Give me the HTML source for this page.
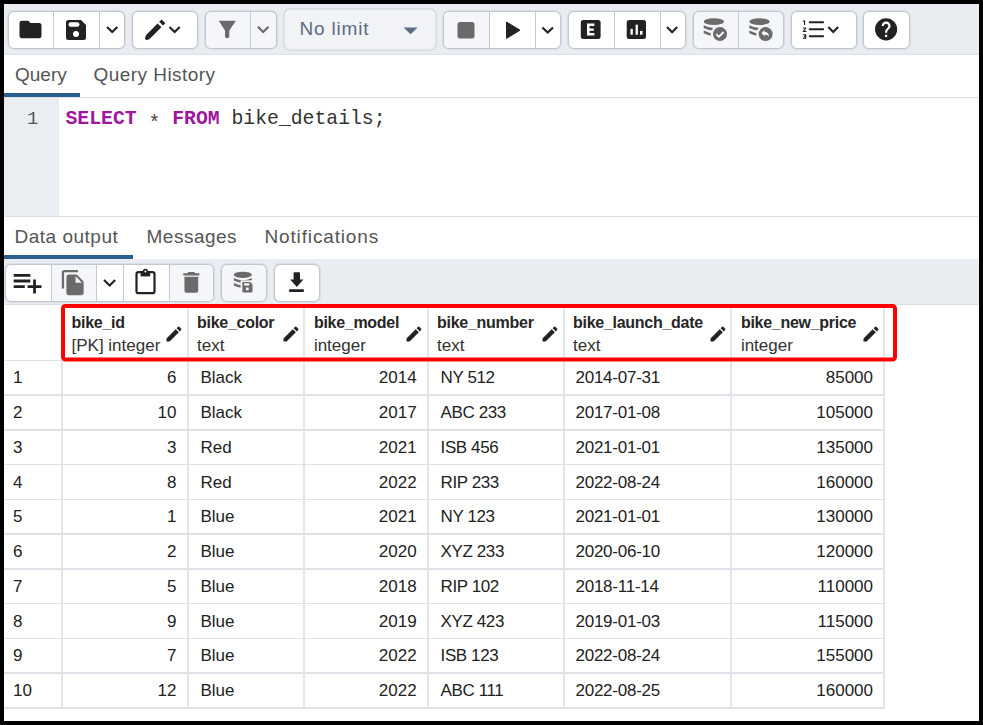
<!DOCTYPE html>
<html><head><meta charset="utf-8">
<style>
*{box-sizing:border-box;margin:0;padding:0}
html,body{width:983px;height:725px;overflow:hidden;background:#000}
body{position:relative;font-family:"Liberation Sans",sans-serif;color:#222}
.a{position:absolute}
#app{position:absolute;left:4px;top:4px;width:975px;height:717px;background:#fff;overflow:hidden}
.tb{position:absolute;background:#e9ecf1}
.g{position:absolute;border:1px solid #c2c8d2;border-radius:6px;background:#fff;box-shadow:0 0 0 0.8px rgba(194,200,210,0.5)}
.d{position:absolute;width:1px;background:#c4cad4}
.dis{background:#f5f6f9}
svg{display:block}
.ov{position:absolute;left:0;top:0}
.tab{position:absolute;font-size:19px;color:#555;white-space:nowrap}
.hl{position:absolute;height:1px;background:#dde1e7}
.hl2{position:absolute;left:4px;width:880px;height:1.5px;background:#dfe2e8}
.vl{position:absolute;width:2px;background:#e3e6eb}
.cell{position:absolute;font-size:17px;color:#222;white-space:nowrap;line-height:20px}
.hn{position:absolute;top:312.5px;font-size:16px;letter-spacing:-0.28px;font-weight:bold;color:#262626;white-space:nowrap;line-height:20px}
.ht{position:absolute;top:336px;font-size:17px;color:#333;white-space:nowrap;line-height:20px}
.pen{position:absolute;top:324px;fill:#222}
</style></head>
<body>
<div id="app"></div>
<!-- toolbar -->
<div class="tb" style="left:4px;top:4px;width:975px;height:51px;border-bottom:1px solid #dde1e7"></div>
<div class="g" style="left:8px;top:11px;width:117px;height:38px"></div>
<div class="d" style="left:53px;top:12px;height:36px"></div>
<div class="d" style="left:99px;top:12px;height:36px"></div>
<div class="g" style="left:132px;top:11px;width:66px;height:38px"></div>
<div class="g dis" style="left:204.5px;top:11px;width:72px;height:38px"></div>
<div class="d" style="left:250px;top:12px;height:36px"></div>
<div class="g" style="left:284px;top:9px;width:152px;height:41px;background:#f1f3f6;border-color:#e0e4ea"></div>
<div class="a" style="left:299.5px;top:18px;font-size:19px;letter-spacing:0.8px;color:#5d6b84;white-space:nowrap">No limit</div>
<div class="g" style="left:443px;top:11px;width:118px;height:38px"></div>
<div class="a dis" style="left:444px;top:12px;width:44.5px;height:36px;border-radius:5px 0 0 5px"></div>
<div class="d" style="left:488.5px;top:12px;height:36px"></div>
<div class="d" style="left:534.5px;top:12px;height:36px"></div>
<div class="g" style="left:568px;top:11px;width:118px;height:38px"></div>
<div class="d" style="left:613.5px;top:12px;height:36px"></div>
<div class="d" style="left:659.5px;top:12px;height:36px"></div>
<div class="g dis" style="left:692.5px;top:11px;width:91.5px;height:38px"></div>
<div class="d" style="left:738px;top:12px;height:36px"></div>
<div class="g" style="left:791px;top:11px;width:66px;height:38px"></div>
<div class="g" style="left:863px;top:11px;width:46.5px;height:38px"></div>

<!-- query tabs -->
<div class="tab" style="left:15px;top:64px">Query</div>
<div class="tab" style="left:93.5px;top:64px;letter-spacing:0.45px">Query History</div>
<div class="a" style="left:4px;top:93px;width:76px;height:4px;background:#2b5f8e"></div>
<div class="hl" style="left:4px;top:97px;width:975px"></div>

<!-- editor -->
<div class="a" style="left:4px;top:98px;width:55px;height:118px;background:#eaedf2"></div>
<div class="a" style="left:27px;top:108px;font-family:'Liberation Mono',monospace;font-size:19px;color:#555">1</div>
<div class="a" style="left:65.5px;top:108px;font-family:'Liberation Mono',monospace;font-size:19.75px;color:#333;white-space:pre"><span style="color:#a0169f;font-weight:bold">SELECT</span> <span style="position:relative;top:5px;color:#444">*</span> <span style="color:#a0169f;font-weight:bold">FROM</span> bike_details;</div>
<div class="hl" style="left:4px;top:216px;width:975px"></div>

<!-- data tabs -->
<div class="tab" style="left:14.5px;top:226px;letter-spacing:0.5px">Data output</div>
<div class="tab" style="left:146.5px;top:226px;letter-spacing:0.5px">Messages</div>
<div class="tab" style="left:264.5px;top:226px;letter-spacing:0.85px">Notifications</div>
<div class="a" style="left:4px;top:255px;width:129px;height:4px;background:#2b5f8e"></div>
<div class="tb" style="left:4px;top:259px;width:975px;height:46px;border-bottom:1px solid #dde1e7"></div>
<div class="g" style="left:5px;top:264px;width:208.5px;height:37.5px"></div>
<div class="a dis" style="left:51px;top:265px;width:45px;height:35.5px"></div>
<div class="a dis" style="left:169px;top:265px;width:43.5px;height:35.5px;border-radius:0 5px 5px 0"></div>
<div class="d" style="left:50.5px;top:265px;height:35.5px"></div>
<div class="d" style="left:96px;top:265px;height:35.5px"></div>
<div class="d" style="left:122.5px;top:265px;height:35.5px"></div>
<div class="d" style="left:168.5px;top:265px;height:35.5px"></div>
<div class="g dis" style="left:221px;top:264px;width:45.5px;height:37.5px"></div>
<div class="g" style="left:273.5px;top:264px;width:46px;height:37.5px"></div>

<!-- table -->
<div class="vl" style="left:61.0px;top:305px;height:403.6px"></div>
<div class="vl" style="left:186.5px;top:305px;height:403.6px"></div>
<div class="vl" style="left:303.4px;top:305px;height:403.6px"></div>
<div class="vl" style="left:426.6px;top:305px;height:403.6px"></div>
<div class="vl" style="left:562.5px;top:305px;height:403.6px"></div>
<div class="vl" style="left:730.4px;top:305px;height:403.6px"></div>
<div class="vl" style="left:883.0px;top:305px;height:403.6px"></div>
<div class="hl2" style="top:359.50px"></div>
<div class="hl2" style="top:394.26px"></div>
<div class="hl2" style="top:429.02px"></div>
<div class="hl2" style="top:463.78px"></div>
<div class="hl2" style="top:498.54px"></div>
<div class="hl2" style="top:533.30px"></div>
<div class="hl2" style="top:568.06px"></div>
<div class="hl2" style="top:602.82px"></div>
<div class="hl2" style="top:637.58px"></div>
<div class="hl2" style="top:672.34px"></div>
<div class="hl2" style="top:707.10px"></div>
<div class="hn" style="left:71.5px">bike_id</div>
<div class="ht" style="left:71.5px">[PK] integer</div>
<svg class="pen" style="left:164.3px" width="20" height="20" viewBox="0 0 24 24"><path d="M3 17.25V21h3.75L17.81 9.94l-3.75-3.75L3 17.25zM20.71 7.04a.996.996 0 0 0 0-1.41l-2.34-2.34a.996.996 0 0 0-1.41 0l-1.83 1.83 3.75 3.75 1.83-1.83z"/></svg>
<div class="hn" style="left:197.0px">bike_color</div>
<div class="ht" style="left:197.0px">text</div>
<svg class="pen" style="left:281.2px" width="20" height="20" viewBox="0 0 24 24"><path d="M3 17.25V21h3.75L17.81 9.94l-3.75-3.75L3 17.25zM20.71 7.04a.996.996 0 0 0 0-1.41l-2.34-2.34a.996.996 0 0 0-1.41 0l-1.83 1.83 3.75 3.75 1.83-1.83z"/></svg>
<div class="hn" style="left:313.9px">bike_model</div>
<div class="ht" style="left:313.9px">integer</div>
<svg class="pen" style="left:404.4px" width="20" height="20" viewBox="0 0 24 24"><path d="M3 17.25V21h3.75L17.81 9.94l-3.75-3.75L3 17.25zM20.71 7.04a.996.996 0 0 0 0-1.41l-2.34-2.34a.996.996 0 0 0-1.41 0l-1.83 1.83 3.75 3.75 1.83-1.83z"/></svg>
<div class="hn" style="left:437.1px">bike_number</div>
<div class="ht" style="left:437.1px">text</div>
<svg class="pen" style="left:540.3px" width="20" height="20" viewBox="0 0 24 24"><path d="M3 17.25V21h3.75L17.81 9.94l-3.75-3.75L3 17.25zM20.71 7.04a.996.996 0 0 0 0-1.41l-2.34-2.34a.996.996 0 0 0-1.41 0l-1.83 1.83 3.75 3.75 1.83-1.83z"/></svg>
<div class="hn" style="left:573.0px">bike_launch_date</div>
<div class="ht" style="left:573.0px">text</div>
<svg class="pen" style="left:708.2px" width="20" height="20" viewBox="0 0 24 24"><path d="M3 17.25V21h3.75L17.81 9.94l-3.75-3.75L3 17.25zM20.71 7.04a.996.996 0 0 0 0-1.41l-2.34-2.34a.996.996 0 0 0-1.41 0l-1.83 1.83 3.75 3.75 1.83-1.83z"/></svg>
<div class="hn" style="left:740.9px">bike_new_price</div>
<div class="ht" style="left:740.9px">integer</div>
<svg class="pen" style="left:860.8px" width="20" height="20" viewBox="0 0 24 24"><path d="M3 17.25V21h3.75L17.81 9.94l-3.75-3.75L3 17.25zM20.71 7.04a.996.996 0 0 0 0-1.41l-2.34-2.34a.996.996 0 0 0-1.41 0l-1.83 1.83 3.75 3.75 1.83-1.83z"/></svg>
<div class="cell" style="left:13px;top:368.38px">1</div>
<div class="cell r" style="right:806.5px;top:368.38px">6</div>
<div class="cell" style="left:200.5px;top:368.38px">Black</div>
<div class="cell r" style="right:566.4px;top:368.38px">2014</div>
<div class="cell" style="left:440.6px;top:368.38px;letter-spacing:-0.4px">NY 512</div>
<div class="cell" style="left:575.5px;top:368.38px;letter-spacing:-0.25px">2014-07-31</div>
<div class="cell r" style="right:110.0px;top:368.38px">85000</div>
<div class="cell" style="left:13px;top:403.14px">2</div>
<div class="cell r" style="right:806.5px;top:403.14px">10</div>
<div class="cell" style="left:200.5px;top:403.14px">Black</div>
<div class="cell r" style="right:566.4px;top:403.14px">2017</div>
<div class="cell" style="left:440.6px;top:403.14px;letter-spacing:-0.4px">ABC 233</div>
<div class="cell" style="left:575.5px;top:403.14px;letter-spacing:-0.25px">2017-01-08</div>
<div class="cell r" style="right:110.0px;top:403.14px">105000</div>
<div class="cell" style="left:13px;top:437.90px">3</div>
<div class="cell r" style="right:806.5px;top:437.90px">3</div>
<div class="cell" style="left:200.5px;top:437.90px">Red</div>
<div class="cell r" style="right:566.4px;top:437.90px">2021</div>
<div class="cell" style="left:440.6px;top:437.90px;letter-spacing:-0.4px">ISB 456</div>
<div class="cell" style="left:575.5px;top:437.90px;letter-spacing:-0.25px">2021-01-01</div>
<div class="cell r" style="right:110.0px;top:437.90px">135000</div>
<div class="cell" style="left:13px;top:472.66px">4</div>
<div class="cell r" style="right:806.5px;top:472.66px">8</div>
<div class="cell" style="left:200.5px;top:472.66px">Red</div>
<div class="cell r" style="right:566.4px;top:472.66px">2022</div>
<div class="cell" style="left:440.6px;top:472.66px;letter-spacing:-0.4px">RIP 233</div>
<div class="cell" style="left:575.5px;top:472.66px;letter-spacing:-0.25px">2022-08-24</div>
<div class="cell r" style="right:110.0px;top:472.66px">160000</div>
<div class="cell" style="left:13px;top:507.42px">5</div>
<div class="cell r" style="right:806.5px;top:507.42px">1</div>
<div class="cell" style="left:200.5px;top:507.42px">Blue</div>
<div class="cell r" style="right:566.4px;top:507.42px">2021</div>
<div class="cell" style="left:440.6px;top:507.42px;letter-spacing:-0.4px">NY 123</div>
<div class="cell" style="left:575.5px;top:507.42px;letter-spacing:-0.25px">2021-01-01</div>
<div class="cell r" style="right:110.0px;top:507.42px">130000</div>
<div class="cell" style="left:13px;top:542.18px">6</div>
<div class="cell r" style="right:806.5px;top:542.18px">2</div>
<div class="cell" style="left:200.5px;top:542.18px">Blue</div>
<div class="cell r" style="right:566.4px;top:542.18px">2020</div>
<div class="cell" style="left:440.6px;top:542.18px;letter-spacing:-0.4px">XYZ 233</div>
<div class="cell" style="left:575.5px;top:542.18px;letter-spacing:-0.25px">2020-06-10</div>
<div class="cell r" style="right:110.0px;top:542.18px">120000</div>
<div class="cell" style="left:13px;top:576.94px">7</div>
<div class="cell r" style="right:806.5px;top:576.94px">5</div>
<div class="cell" style="left:200.5px;top:576.94px">Blue</div>
<div class="cell r" style="right:566.4px;top:576.94px">2018</div>
<div class="cell" style="left:440.6px;top:576.94px;letter-spacing:-0.4px">RIP 102</div>
<div class="cell" style="left:575.5px;top:576.94px;letter-spacing:-0.25px">2018-11-14</div>
<div class="cell r" style="right:110.0px;top:576.94px">110000</div>
<div class="cell" style="left:13px;top:611.70px">8</div>
<div class="cell r" style="right:806.5px;top:611.70px">9</div>
<div class="cell" style="left:200.5px;top:611.70px">Blue</div>
<div class="cell r" style="right:566.4px;top:611.70px">2019</div>
<div class="cell" style="left:440.6px;top:611.70px;letter-spacing:-0.4px">XYZ 423</div>
<div class="cell" style="left:575.5px;top:611.70px;letter-spacing:-0.25px">2019-01-03</div>
<div class="cell r" style="right:110.0px;top:611.70px">115000</div>
<div class="cell" style="left:13px;top:646.46px">9</div>
<div class="cell r" style="right:806.5px;top:646.46px">7</div>
<div class="cell" style="left:200.5px;top:646.46px">Blue</div>
<div class="cell r" style="right:566.4px;top:646.46px">2022</div>
<div class="cell" style="left:440.6px;top:646.46px;letter-spacing:-0.4px">ISB 123</div>
<div class="cell" style="left:575.5px;top:646.46px;letter-spacing:-0.25px">2022-08-24</div>
<div class="cell r" style="right:110.0px;top:646.46px">155000</div>
<div class="cell" style="left:13px;top:681.22px">10</div>
<div class="cell r" style="right:806.5px;top:681.22px">12</div>
<div class="cell" style="left:200.5px;top:681.22px">Blue</div>
<div class="cell r" style="right:566.4px;top:681.22px">2022</div>
<div class="cell" style="left:440.6px;top:681.22px;letter-spacing:-0.4px">ABC 111</div>
<div class="cell" style="left:575.5px;top:681.22px;letter-spacing:-0.25px">2022-08-25</div>
<div class="cell r" style="right:110.0px;top:681.22px">160000</div>
<svg class="ov" width="983" height="725" viewBox="0 0 983 725">
<!-- folder -->
<path fill="#222" transform="translate(17.3,16.3) scale(1.1)" d="M10 4H4c-1.1 0-1.99.9-1.99 2L2 18c0 1.1.9 2 2 2h16c1.1 0 2-.9 2-2V8c0-1.1-.9-2-2-2h-8l-2-2z"/>
<!-- save -->
<g transform="translate(66,20)">
<path fill="#222" d="M2.5,0H15L20,5V17.5Q20,20 17.5,20H2.5Q0,20 0,17.5V2.5Q0,0 2.5,0Z"/>
<rect x="2.5" y="2.2" width="11" height="4.6" rx="2.3" fill="#fff"/>
<circle cx="10" cy="14" r="3" fill="#fff"/>
</g>
<!-- chevrons -->
<g fill="none" stroke="#222" stroke-width="2.1" stroke-linejoin="miter">
<path d="M107,26.9 L112.2,32 L117.4,26.9"/>
<path d="M169.5,27 L174.6,32.1 L179.7,27"/>
<path d="M542.4,27.4 L547.7,32.6 L553,27.4"/>
<path d="M667,27 L672.1,32.3 L677.2,27"/>
<path d="M828.3,26.9 L833.2,32 L838.2,26.9"/>
<path d="M104,280 L109.6,285.6 L115.2,280"/>
</g>
<path fill="none" stroke="#6b6b6b" stroke-width="2.1" d="M257.9,26.7 L263.2,32 L268.5,26.7"/>
<!-- pencil toolbar -->
<g fill="#222">
<path d="M146.8,34.2 L157.6,23.4 L161.4,27.2 L150.6,38 Q148.5,40.1 146.6,39.9 Q145.2,39.8 145,38.6 Q144.8,36.2 146.8,34.2Z"/>
<path d="M159.2,21.8 L161.6,19.4 L165.4,23.2 L163,25.6Z"/>
</g>
<!-- filter -->
<path fill="#6b6b6b" d="M218.7,20.8 H235.9 L229.3,30.5 V36.3 Q229.3,38.3 227.15,38.3 Q225,38.3 225,36.3 V30.5 Z"/>
<!-- no limit caret -->
<path fill="#5d6b84" d="M403.6,27.4 H417.6 L410.6,34.3Z"/>
<!-- stop -->
<rect x="457.5" y="22" width="17" height="16.6" rx="2.5" fill="#6b6b6b"/>
<!-- play -->
<path fill="#222" stroke="#222" stroke-width="1" stroke-linejoin="round" d="M506.5,22 L520,30.2 L506.5,38.4Z"/>
<!-- E -->
<rect x="580.8" y="20" width="19.8" height="19" rx="2.5" fill="#222"/>
<path fill="#fff" d="M587,23.6 H594.4 V26 H589.6 V28.4 H593.8 V30.7 H589.6 V33.1 H594.4 V35.5 H587Z"/>
<!-- chart -->
<rect x="626.7" y="20" width="19.3" height="19" rx="2.5" fill="#222"/>
<rect x="630.5" y="28.9" width="2.3" height="5.8" fill="#fff"/>
<rect x="635.6" y="24.7" width="2.3" height="10" fill="#fff"/>
<rect x="640" y="30.9" width="2.5" height="3.8" fill="#fff"/>
<!-- db commit -->
<g fill="#6b6b6b">
<ellipse cx="713.9" cy="21.7" rx="10.2" ry="3.4"/>
<path d="M703.7,25.2 Q713.9,30.6 724,25.2 V27.9 Q713.9,33.3 703.7,27.9Z"/>
<path d="M703.7,30.6 Q713.9,36 724,30.6 V33.3 Q713.9,38.7 703.7,33.3Z"/>
</g>
<circle cx="720" cy="34.1" r="9.3" fill="#f5f6f9"/>
<circle cx="720" cy="34.1" r="7" fill="#6b6b6b"/>
<path fill="none" stroke="#fff" stroke-width="1.8" d="M716.3,34.2 L718.9,36.8 L723.6,32"/>
<!-- db rollback -->
<g fill="#6b6b6b">
<ellipse cx="759.5" cy="21.7" rx="10.2" ry="3.4"/>
<path d="M749.3,25.2 Q759.5,30.6 769.6,25.2 V27.9 Q759.5,33.3 749.3,27.9Z"/>
<path d="M749.3,30.6 Q759.5,36 769.6,30.6 V33.3 Q759.5,38.7 749.3,33.3Z"/>
</g>
<circle cx="765.6" cy="34.1" r="9.3" fill="#f5f6f9"/>
<circle cx="765.6" cy="34.1" r="7" fill="#6b6b6b"/>
<path fill="#fff" d="M761.6,33 L764.6,30 V31.9 Q768.8,32 769,36.8 Q767.6,34.6 764.6,34.6 V36.4Z"/>
<!-- numbered list -->
<path fill="#222" transform="translate(800.64,16.08) scale(1.13)" d="M2 17h2v.5H3v1h1v.5H2v1h3v-4H2v1zm1-9h1V4H2v1h1v3zm-1 3h1.8L2 13.1v.9h3v-1H3.2L5 10.9V10H2v1z"/>
<rect x="808.8" y="21.3" width="15.2" height="2" rx="0.8" fill="#222"/>
<rect x="808.8" y="28.3" width="15.2" height="2" rx="0.8" fill="#222"/>
<rect x="808.8" y="35.3" width="15.2" height="2" rx="0.8" fill="#222"/>
<!-- help -->
<path fill="#222" transform="translate(872.8,16) scale(1.11)" d="M12 2C6.48 2 2 6.48 2 12s4.48 10 10 10 10-4.48 10-10S17.52 2 12 2zm1 17h-2v-2h2v2zm2.07-7.75-.9.92C13.45 12.9 13 13.5 13 15h-2v-.5c0-1.1.45-2.1 1.17-2.83l1.24-1.26c.37-.36.59-.86.59-1.41 0-1.1-.9-2-2-2s-2 .9-2 2H8c0-2.21 1.79-4 4-4s4 1.79 4 4c0 .88-.36 1.68-.93 2.25z"/>

<!-- data toolbar -->
<path fill="#222" transform="translate(10.9,265.7) scale(1.39)" d="M14 10H2v2h12v-2zm0-4H2v2h12V6zm4 8v-4h-2v4h-4v2h4v4h2v-4h4v-2h-4zM2 16h8v-2H2v2z"/>
<path fill="#6b6b6b" transform="translate(59.5,268.85) scale(1.15)" d="M16 1H4c-1.1 0-2 .9-2 2v14h2V3h12V1zm-1 4 6 6v10c0 1.1-.9 2-2 2H7.99C6.89 23 6 22.1 6 21l.01-14c0-1.1.89-2 1.99-2h7zm-1 7h5.5L14 6.5V12z"/>
<!-- paste -->
<rect x="136.5" y="272.2" width="18" height="21" rx="2" fill="none" stroke="#222" stroke-width="2.2"/>
<rect x="140.6" y="272.4" width="9.6" height="4" fill="#222"/>
<circle cx="145.4" cy="271.4" r="2.6" fill="#222"/>
<circle cx="145.4" cy="271.5" r="1" fill="#fff"/>
<!-- delete -->
<path fill="#6b6b6b" transform="translate(177.55,268.65) scale(1.15)" d="M6 19c0 1.1.9 2 2 2h8c1.1 0 2-.9 2-2V7H6v12zM19 4h-3.5l-1-1h-5l-1 1H5v2h14V4z"/>
<!-- save data -->
<g fill="#6b6b6b">
<ellipse cx="242.8" cy="274.8" rx="9" ry="3.1"/>
<path d="M233.8,278 Q242.8,282.6 251.8,278 V280.4 Q242.8,285 233.8,280.4Z"/>
<path d="M233.8,283 Q242.8,287.6 251.8,283 V285.4 Q242.8,290 233.8,285.4Z"/>
</g>
<rect x="240.6" y="280.4" width="13.2" height="13.4" fill="#f5f6f9"/>
<path fill="#6b6b6b" d="M242.4,282 H250.2 L252.5,284.3 V291.5 Q252.5,292.5 251.5,292.5 H243.4 Q242.4,292.5 242.4,291.5Z"/>
<rect x="244.2" y="283.3" width="5.2" height="2.2" fill="#fff"/>
<rect x="246" y="287.6" width="2.6" height="2.6" fill="#fff"/>
<!-- download -->
<g fill="#222">
<rect x="293.6" y="272.3" width="6.4" height="8" rx="0.6"/>
<path d="M290.2,279.6 H303.4 L296.8,286.9Z"/>
<rect x="288.9" y="289.3" width="15.1" height="2.6" rx="1.2"/>
</g>
<!-- red highlight -->
<rect x="63" y="306" width="832" height="53.5" rx="2.5" fill="none" stroke="#ff0000" stroke-width="4"/>
</svg>

</body></html>
